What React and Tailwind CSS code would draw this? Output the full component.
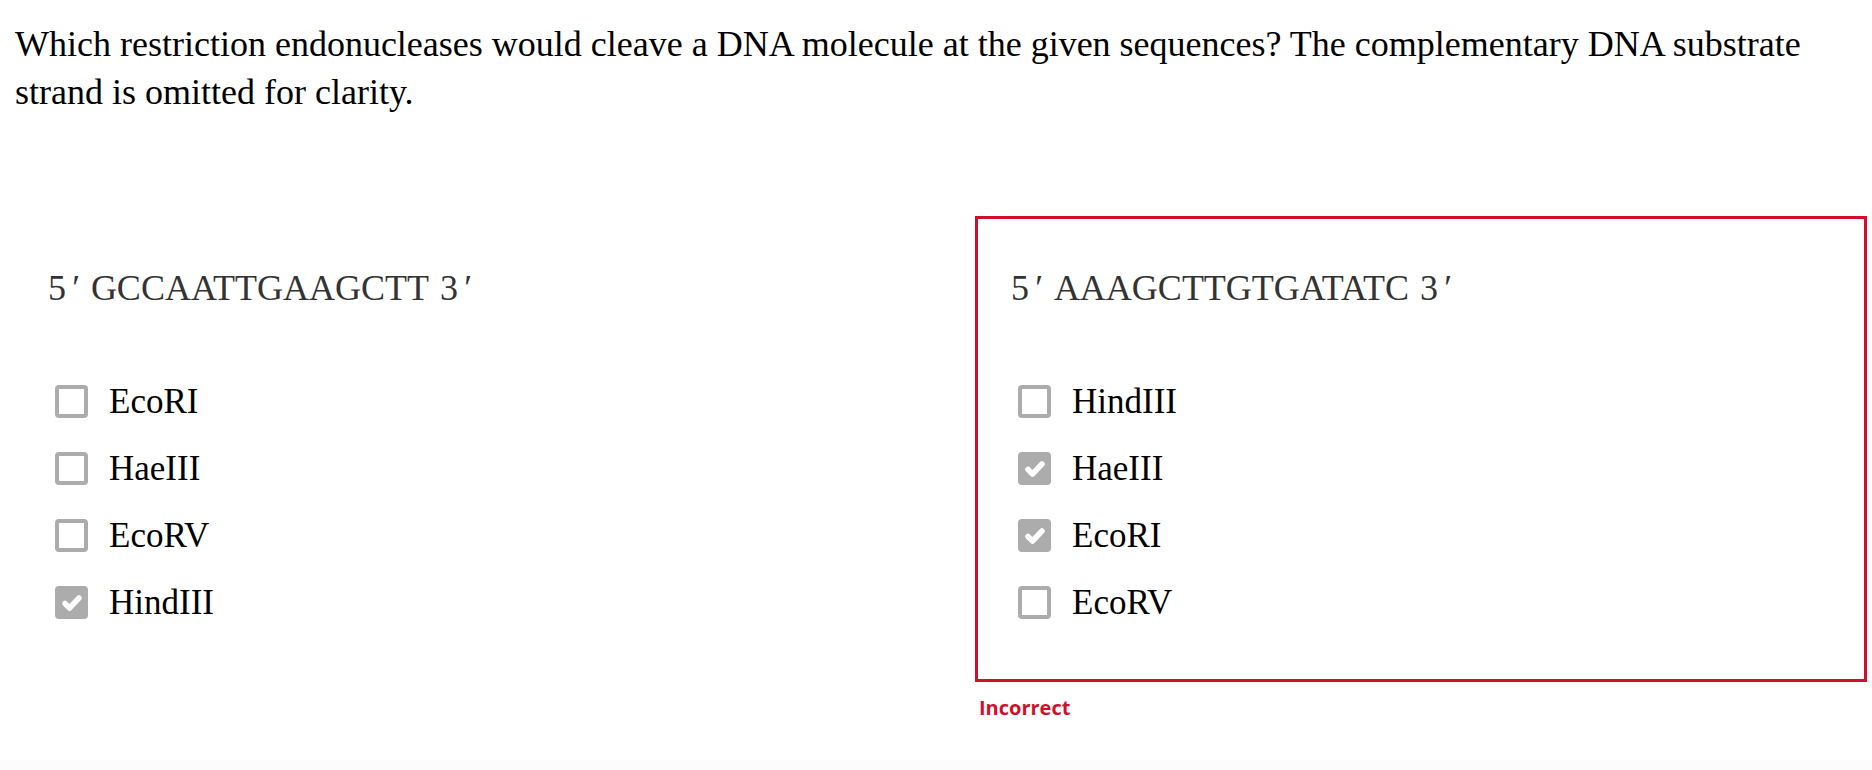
const serif = { fontFamily: '"Liberation Serif", "Times New Roman", serif' };

const panels = [
  {
    seq: 'GCCAATTGAAGCTT',
    options: [
      { label: 'EcoRI', checked: false },
      { label: 'HaeIII', checked: false },
      { label: 'EcoRV', checked: false },
      { label: 'HindIII', checked: true },
    ],
    incorrect: false,
  },
  {
    seq: 'AAAGCTTGTGATATC',
    options: [
      { label: 'HindIII', checked: false },
      { label: 'HaeIII', checked: true },
      { label: 'EcoRI', checked: true },
      { label: 'EcoRV', checked: false },
    ],
    incorrect: true,
  },
];

function Checkbox({ checked }) {
  if (checked) {
    return (
      <span className="flex h-[33px] w-[33px] shrink-0 items-center justify-center rounded-[4px] bg-[#acacac]">
        <svg viewBox="0 0 24 24" className="h-[24px] w-[24px]" fill="none">
          <path d="M5 12.5l4.5 4.5 9.5-10" stroke="white" strokeWidth="5.5" strokeLinecap="round" strokeLinejoin="round" />
        </svg>
      </span>
    );
  }
  return <span className="h-[33px] w-[33px] shrink-0 rounded-[4px] border-[4px] border-[#acacac] bg-white" />;
}

function Panel({ panel }) {
  return (
    <div>
      <div
        className={
          'h-[466px] border-[3px] pl-[33px] pt-[49px] ' +
          (panel.incorrect ? 'border-[#d10f2b]' : 'border-transparent')
        }
      >
        <div className="text-[36px] leading-[40px] text-[#333]" style={serif}>
          <span>5</span>
          <span className="ml-[4px] mr-[13px] italic">′</span>
          <span>{panel.seq}</span>
          <span className="ml-[11px]">3</span>
          <span className="ml-[4px] italic">′</span>
        </div>
        <ul className="mt-[77px] flex flex-col gap-[34px] pl-[7px]">
          {panel.options.map((opt, i) => (
            <li key={i} className="flex h-[33px] items-center gap-[21px]">
              <Checkbox checked={opt.checked} />
              <span className="text-[35px] leading-[33px] text-black" style={serif}>
                {opt.label}
              </span>
            </li>
          ))}
        </ul>
      </div>
      {panel.incorrect && (
        <div
          className="mt-[14px] pl-[4px] text-[20px] font-bold leading-[24px] text-[#d10f2b]"
          style={{ fontFamily: '"Open Sans", "Noto Sans", sans-serif' }}
        >
          Incorrect
        </div>
      )}
    </div>
  );
}

export default function App() {
  return (
    <div className="flex h-[770px] w-full flex-col bg-white">
      <div className="flex-1">
        <p className="px-[15px] pt-[20px] text-[36px] leading-[48px] text-black" style={serif}>
          Which restriction endonucleases would cleave a DNA molecule at the given sequences? The complementary DNA
          substrate strand is omitted for clarity.
        </p>
        <div className="mt-[100px] grid grid-cols-2 gap-[71px] pl-[12px] pr-[5px]">
          {panels.map((p, i) => (
            <Panel key={i} panel={p} />
          ))}
        </div>
      </div>
      <div className="h-[10px] bg-[#fcfcfc]" />
    </div>
  );
}
